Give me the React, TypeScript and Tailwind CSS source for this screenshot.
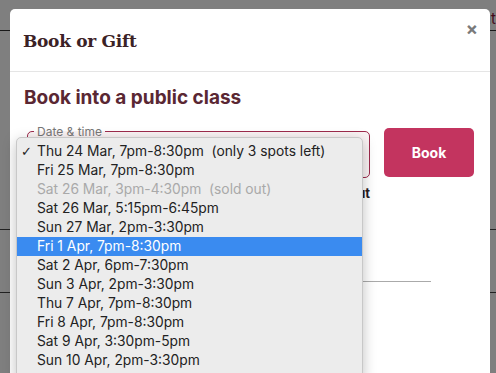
const slots = [
  { label: "Thu 24 Mar, 7pm-8:30pm  (only 3 spots left)", checked: true },
  { label: "Fri 25 Mar, 7pm-8:30pm" },
  { label: "Sat 26 Mar, 3pm-4:30pm  (sold out)", disabled: true },
  { label: "Sat 26 Mar, 5:15pm-6:45pm" },
  { label: "Sun 27 Mar, 2pm-3:30pm" },
  { label: "Fri 1 Apr, 7pm-8:30pm", active: true },
  { label: "Sat 2 Apr, 6pm-7:30pm" },
  { label: "Sun 3 Apr, 2pm-3:30pm" },
  { label: "Thu 7 Apr, 7pm-8:30pm" },
  { label: "Fri 8 Apr, 7pm-8:30pm" },
  { label: "Sat 9 Apr, 3:30pm-5pm" },
  { label: "Sun 10 Apr, 2pm-3:30pm" },
];

const App = () => {
  return (
    <div className="relative h-[373px] w-[496px] overflow-hidden bg-white font-['Inter',sans-serif]">
      {/* page behind the modal */}
      <nav className="flex h-[31px] items-start gap-6 border-b border-[#333] pl-[78px] pt-[8px] text-[15px] text-[#8a1538]">
        <span className="text-[#333]">Services</span>
        <span>Locations</span>
        <span>Teachers</span>
        <span>Book a class</span>
        <span>About</span>
      </nav>
      <div className="mt-[198px] border-t border-[#444]" />
      <div className="mt-[62px] border-t border-[#444]" />

      <div className="absolute inset-0 bg-black/50" />

      {/* modal */}
      <div className="absolute left-[10px] top-[9px] h-[400px] w-[480px] rounded-[5px] bg-white">
        <div className="flex h-[63px] items-center justify-between border-b border-[#e5e5e5] pl-[13px] pr-[12px]">
          <h2 className="pt-[3px] font-['DejaVu_Serif',serif] text-[17px] font-bold tracking-[-0.3px] text-[#3b2226]">
            Book or Gift
          </h2>
          <span className="-mt-[22px] text-[18px] font-bold leading-none text-[#7a7a7a]">
            ×
          </span>
        </div>
        <div className="px-[14px] pt-[12px]">
          <h3 className="text-[19px] font-bold text-[#5a2733]">
            Book into a public class
          </h3>
          <div className="mt-[13px] flex gap-[14px]">
            <fieldset className="ml-[3px] h-[52px] w-[343px] rounded-[5px] border border-[#9d2a4c] bg-[#faf3f4] px-[6px]">
              <legend className="px-[3px] text-[12px] leading-[12px] text-[#777]">
                Date &amp; time
              </legend>
            </fieldset>
            <button className="mt-[2px] h-[49px] w-[90px] rounded-[5px] bg-[#c3345f] text-[14px] font-bold text-white">
              Book
            </button>
          </div>
          <p className="mt-[6px] w-[346px] text-right text-[13px] font-bold text-[#2b1b1e]">
            Want a private class? Find out
          </p>
          <div className="mt-[78px] w-[407px] border-t border-[#aaa]" />
        </div>
      </div>

      {/* native select popup */}
      <div className="absolute left-[16px] top-[137px] w-[347px] rounded-t-[5px] border border-[#c8c8c8] bg-[#ececec] pt-[4px] pb-[6px] text-[13.8px] shadow-[0_4px_14px_rgba(0,0,0,0.25)]">
        {slots.map((s) => (
          <div
            key={s.label}
            className={
              "flex h-[19px] items-center whitespace-pre " +
              (s.active
                ? "bg-[#3a8bf0] text-white"
                : s.disabled
                ? "text-[#a9a9a9]"
                : "text-[#222]")
            }
          >
            <span className="w-[20px] pl-[4px] font-['DejaVu_Sans',sans-serif] text-[13px] leading-none">
              {s.checked ? "✓" : ""}
            </span>
            {s.label}
          </div>
        ))}
      </div>
    </div>
  );
};

export default App;
